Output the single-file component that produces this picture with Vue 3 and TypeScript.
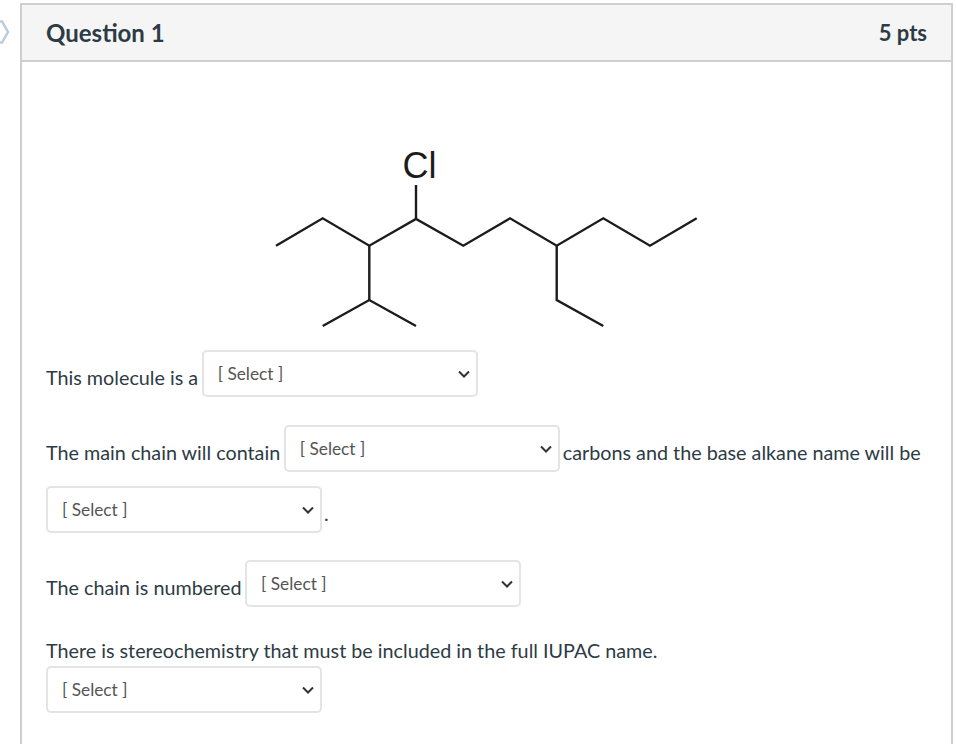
<script setup lang="ts">
const bonds: string[] = [
  '276,245.7 322.7,218.3 369.3,245.7 416,219 463.3,245.7 510,218.3 556.7,245.7 603.3,218.3 650,245.7 696.7,218.3',
  '369.3,245.7 369.3,300',
  '322.7,326 369.3,300 416,326',
  '556.7,245.7 556.7,300 603.3,326',
  '416,185 416,219',
]
const placeholder = '[ Select ]'
</script>

<template>
  <div class="page">
    <div class="gutter">
      <svg class="flag" width="12" height="24" viewBox="0 0 12 24">
        <path d="M-6 1.5 H2 L8 12 L2 22.5 H-6" fill="#fff" stroke="#bccdd9" stroke-width="2.5" />
      </svg>
    </div>

    <section class="card">
      <header class="card-head">
        <h2>Question 1</h2>
        <span class="pts">5 pts</span>
      </header>

      <div class="card-body">
        <svg class="molecule" width="906" height="200" viewBox="22 140 906 200">
          <polyline v-for="b in bonds" :key="b" :points="b" fill="none" stroke="#1c1c1c" stroke-width="2.4" />
          <text x="402.5" y="178" class="cl">Cl</text>
        </svg>

        <p class="first">This molecule is a <select class="inline"><option>{{ placeholder }}</option></select></p>

        <p>
          The main chain will contain <select class="inline"><option>{{ placeholder }}</option></select> carbons and the base alkane name will be
          <select><option>{{ placeholder }}</option></select><span class="dot">.</span>
        </p>

        <p class="third">The chain is numbered <select class="inline"><option>{{ placeholder }}</option></select></p>

        <p class="last">There is stereochemistry that must be included in the full IUPAC name.</p>
        <p class="tight"><select><option>{{ placeholder }}</option></select></p>
      </div>
    </section>
  </div>
</template>

<style>
html, body {
  margin: 0;
  background: #fff;
  overflow: hidden;
}
</style>

<style scoped>
.page {
  display: flex;
  height: 744px;
  padding-top: 3px;
  box-sizing: border-box;
  font-family: Lato, "Open Sans", sans-serif;
  color: #2d3b45;
}

.gutter {
  width: 20px;
  flex-shrink: 0;
  padding-top: 17px;
}

.flag {
  display: block;
}

.card {
  width: 933px;
  flex-shrink: 0;
  box-sizing: border-box;
  border: 2px solid #cfcfcf;
  border-bottom: 0;
}

.card-head {
  display: flex;
  align-items: center;
  justify-content: space-between;
  height: 55px;
  padding: 0 24px;
  background: #f5f5f5;
  border-bottom: 2px solid #cfcfcf;
}

.card-head h2 {
  margin: 0;
  font-size: 24px;
  font-weight: 700;
  color: #2d3b45;
}

.pts {
  font-size: 22px;
  font-weight: 700;
  color: #2d3b45;
}

.card-body {
  padding: 78px 24px 0;
}

.molecule {
  display: block;
  margin: 0 -24px;
}

.cl {
  font-family: "Liberation Sans", Arial, sans-serif;
  font-size: 36px;
  fill: #1c1c1c;
}

p {
  margin: 0 0 13px;
  font-size: 19.75px;
  line-height: 26px;
}

.first {
  margin-top: 9px;
  margin-bottom: 14px;
}

.third {
  margin-bottom: 18px;
}

select {
  appearance: none;
  width: 276px;
  height: 47px;
  margin: 1px 0 13px;
  padding: 0 14px;
  box-sizing: border-box;
  background: #fff url("data:image/svg+xml,%3Csvg xmlns='http://www.w3.org/2000/svg' width='12' height='8' viewBox='0 0 12 8'%3E%3Cpath d='M1 1.5 L6 6.5 L11 1.5' fill='none' stroke='%23333' stroke-width='2'/%3E%3C/svg%3E") no-repeat right 6px center;
  border: 2px solid #e4e4e4;
  border-radius: 5px;
  font-family: Lato, sans-serif;
  font-size: 17.3px;
  color: #555;
  vertical-align: middle;
}

select.inline {
  margin-left: -1.5px;
  margin-right: -2px;
}

.dot {
  margin-left: 2px;
}

.last {
  margin-bottom: 0;
}

.tight {
  margin-top: 1px;
}
</style>
